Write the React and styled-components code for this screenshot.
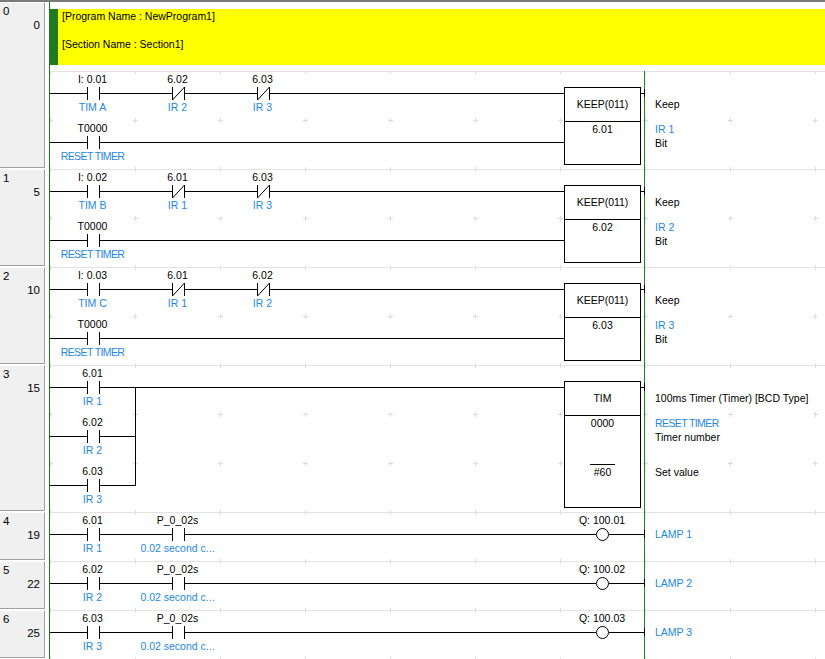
import React from 'react';
import styled, { createGlobalStyle } from 'styled-components';

const CELL = 85;
const LINE = 49;

const dotTile = encodeURIComponent(
  `<svg xmlns="http://www.w3.org/2000/svg" width="${CELL}" height="${LINE}" fill="#dcdcdc"><rect width="3" height="1"/><rect x="83" width="2" height="1"/><rect width="1" height="3"/><rect y="47" width="1" height="2"/></svg>`
);

const GlobalStyle = createGlobalStyle`
  html, body { margin: 0; padding: 0; background: #fff; overflow: hidden; }
  body {
    font-family: "Liberation Sans", Arial, sans-serif;
    font-size: 10.5px;
    line-height: 14px;
    color: #000;
  }
`;

const Sheet = styled.div`
  width: 825px;
  height: 659px;
  overflow: hidden;
  border-top: 2px solid #7a7a7a;
  box-sizing: border-box;
`;

const Row = styled.div`
  display: flex;
`;

const Gutter = styled.div`
  flex: 0 0 45px;
  box-sizing: border-box;
  margin-bottom: 1px;
  padding: 1px 4px 0 3px;
  background: #f0f0f0;
  border-right: 1px solid #a0a0a0;
  border-bottom: 1px solid #a0a0a0;
  border-top: 1px solid #fff;
  font-size: 11.5px;
`;

const RowNumber = styled.div`
  height: 14px;
`;

const StepNumber = styled.div`
  text-align: right;
`;

const Ladder = styled.div`
  flex: 1;
  margin-left: 4px;
  border-left: 1px solid #1f7a1f;
  min-width: 0;
`;

const Header = styled.div`
  box-sizing: border-box;
  height: 56px;
  margin: 7px 0 6px;
  padding: 0 0 0 4px;
  background: #ffff00;
  border-left: 8px solid #1f7a1f;
`;

const HeaderLine = styled.div`
  height: 28px;
`;

const Network = styled.div`
  display: flex;
  height: ${p => p.$lines * LINE}px;
  background:
    linear-gradient(#e2e2e2, #e2e2e2) top left / 100% 1px no-repeat,
    url("data:image/svg+xml,${dotTile}") 0 0 repeat;
`;

const Lines = styled.div`
  position: relative;
  flex: 0 0 ${p => (p.$toCoil ? 510 : 514)}px;
`;

const Line = styled.div`
  display: flex;
  height: ${LINE}px;
`;

const Cell = styled.div`
  flex: 0 0 ${p => p.$width || CELL}px;
  display: flex;
  flex-direction: column;
  align-items: center;
  padding-top: 1px;
  box-sizing: border-box;
`;

const Address = styled.div`
  height: 15px;
  white-space: nowrap;
`;

const Symbol = styled.svg`
  display: block;
  flex: none;
`;

const Remark = styled.div`
  height: 14px;
  color: #1e88e5;
  white-space: nowrap;
`;

const Caps = styled.span`
  letter-spacing: -0.6px;
`;

const Wire = styled.div`
  flex: 1;
  height: 1px;
  margin-top: 22px;
  background: #000;
`;

const Branch = styled.div`
  position: absolute;
  left: ${CELL}px;
  top: 22px;
  width: 1px;
  height: ${LINE * 2 + 1}px;
  background: #000;
`;

const Block = styled.div`
  flex: 0 0 77px;
  box-sizing: border-box;
  align-self: flex-start;
  margin-top: 16px;
  border: 1px solid #000;
  height: ${p => p.$lines * LINE - 20}px;
  background: #fff;
  text-align: center;
`;

const BlockTitle = styled.div`
  height: 33px;
  line-height: 33px;
  border-bottom: 1px solid #000;
`;

const Operand = styled.div`
  height: ${LINE}px;
`;

const Overlined = styled.span`
  display: inline-block;
  width: 25px;
  border-top: 1px solid #000;
  margin-top: -1px;
`;

const Stub = styled.div`
  flex: 0 0 3px;
  height: 1px;
  margin-top: 22px;
  background: #000;
`;

const Rail = styled.div`
  flex: 0 0 1px;
  position: relative;
  background: #1b8a1b;

  &::after {
    content: '';
    position: absolute;
    left: 0;
    top: 18px;
    width: 1px;
    height: 8px;
    background: #000;
  }
`;

const Comments = styled.div`
  flex: 1;
  padding-left: 10px;
  white-space: nowrap;
`;

const CommentTitle = styled.div`
  height: ${LINE}px;
  box-sizing: border-box;
  padding-top: 26px;
`;

const CommentSlot = styled.div`
  height: ${LINE}px;
  box-sizing: border-box;
  padding-top: 2px;
`;

const CommentBlue = styled.div`
  color: #1e88e5;
`;

const CoilComment = styled.div`
  padding-top: 15px;
  color: #1e88e5;
`;

const Contact = ({ address, remark, closed }) => (
  <Cell>
    <Address>{address}</Address>
    <Symbol width={CELL} height="13" viewBox="0 0 85 13">
      <path d="M0 6.500H37M49 6.500H85M37.500 0V13M49.500 0V13" fill="none" stroke="#000" />
      {closed && <path d="M37.500 13L49.500 0" fill="none" stroke="#000" />}
    </Symbol>
    <Remark>{remark}</Remark>
  </Cell>
);

const Coil = ({ address }) => (
  <Cell $width={84}>
    <Address>{address}</Address>
    <Symbol width="84" height="13" viewBox="0 0 84 13">
      <path d="M0 6.500H36M49 6.500H84" fill="none" stroke="#000" />
      <circle cx="42.500" cy="6.500" r="6" fill="#fff" stroke="#000" />
    </Symbol>
  </Cell>
);

const KeepRung = ({ set, coil, comment }) => (
  <Network $lines={2}>
    <Lines>
      <Line>
        {set.map(c => <Contact key={c.address} {...c} />)}
        <Wire />
      </Line>
      <Line>
        <Contact address="T0000" remark={<Caps>RESET TIMER</Caps>} />
        <Wire />
      </Line>
    </Lines>
    <Block $lines={2}>
      <BlockTitle>KEEP(011)</BlockTitle>
      <Operand>{coil}</Operand>
    </Block>
    <Stub />
    <Rail />
    <Comments>
      <CommentTitle>Keep</CommentTitle>
      <CommentSlot>
        <CommentBlue>{comment}</CommentBlue>
        Bit
      </CommentSlot>
    </Comments>
  </Network>
);

const LampRung = ({ input, remark, coil, lamp }) => (
  <Network $lines={1}>
    <Lines $toCoil>
      <Line>
        <Contact address={input} remark={remark} />
        <Contact address="P_0_02s" remark="0.02 second c..." />
        <Wire />
      </Line>
    </Lines>
    <Coil address={coil} />
    <Rail />
    <Comments>
      <CoilComment>{lamp}</CoilComment>
    </Comments>
  </Network>
);

const rows = [
  {
    no: 1, step: 5, coil: '6.02', comment: 'IR 2',
    set: [
      { address: 'I: 0.02', remark: 'TIM B' },
      { address: '6.01', remark: 'IR 1', closed: true },
      { address: '6.03', remark: 'IR 3', closed: true },
    ],
  },
  {
    no: 2, step: 10, coil: '6.03', comment: 'IR 3',
    set: [
      { address: 'I: 0.03', remark: 'TIM C' },
      { address: '6.01', remark: 'IR 1', closed: true },
      { address: '6.02', remark: 'IR 2', closed: true },
    ],
  },
];

const lamps = [
  { no: 4, step: 19, input: '6.01', remark: 'IR 1', coil: 'Q: 100.01', lamp: 'LAMP 1' },
  { no: 5, step: 22, input: '6.02', remark: 'IR 2', coil: 'Q: 100.02', lamp: 'LAMP 2' },
  { no: 6, step: 25, input: '6.03', remark: 'IR 3', coil: 'Q: 100.03', lamp: 'LAMP 3' },
];

export default function App() {
  return (
    <Sheet>
      <GlobalStyle />

      <Row>
        <Gutter>
          <RowNumber>0</RowNumber>
          <StepNumber>0</StepNumber>
        </Gutter>
        <Ladder>
          <Header>
            <HeaderLine>[Program Name : NewProgram1]</HeaderLine>
            <HeaderLine>[Section Name : Section1]</HeaderLine>
          </Header>
          <KeepRung
            coil="6.01"
            comment="IR 1"
            set={[
              { address: 'I: 0.01', remark: 'TIM A' },
              { address: '6.02', remark: 'IR 2', closed: true },
              { address: '6.03', remark: 'IR 3', closed: true },
            ]}
          />
        </Ladder>
      </Row>

      {rows.map(r => (
        <Row key={r.no}>
          <Gutter>
            <RowNumber>{r.no}</RowNumber>
            <StepNumber>{r.step}</StepNumber>
          </Gutter>
          <Ladder>
            <KeepRung set={r.set} coil={r.coil} comment={r.comment} />
          </Ladder>
        </Row>
      ))}

      <Row>
        <Gutter>
          <RowNumber>3</RowNumber>
          <StepNumber>15</StepNumber>
        </Gutter>
        <Ladder>
          <Network $lines={3}>
            <Lines>
              <Branch />
              <Line>
                <Contact address="6.01" remark="IR 1" />
                <Wire />
              </Line>
              <Line>
                <Contact address="6.02" remark="IR 2" />
              </Line>
              <Line>
                <Contact address="6.03" remark="IR 3" />
              </Line>
            </Lines>
            <Block $lines={3}>
              <BlockTitle>TIM</BlockTitle>
              <Operand>0000</Operand>
              <Operand>
                <Overlined>#60</Overlined>
              </Operand>
            </Block>
            <Stub />
            <Rail />
            <Comments>
              <CommentTitle>100ms Timer (Timer) [BCD Type]</CommentTitle>
              <CommentSlot>
                <CommentBlue><Caps>RESET TIMER</Caps></CommentBlue>
                Timer number
              </CommentSlot>
              <CommentSlot>Set value</CommentSlot>
            </Comments>
          </Network>
        </Ladder>
      </Row>

      {lamps.map(l => (
        <Row key={l.no}>
          <Gutter>
            <RowNumber>{l.no}</RowNumber>
            <StepNumber>{l.step}</StepNumber>
          </Gutter>
          <Ladder>
            <LampRung {...l} />
          </Ladder>
        </Row>
      ))}
    </Sheet>
  );
}
